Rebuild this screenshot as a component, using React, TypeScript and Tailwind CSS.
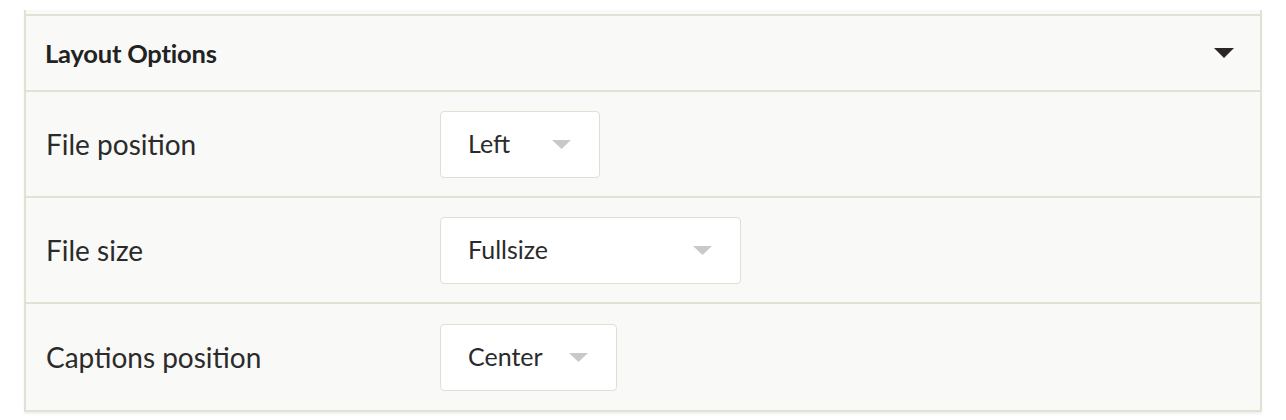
import React from 'react';

interface OptionRow {
  label: string;
  value: string;
  width: string;
}

const rows: OptionRow[] = [
  { label: 'File position', value: 'Left', width: 'w-[160px]' },
  { label: 'File size', value: 'Fullsize', width: 'w-[301px]' },
  { label: 'Captions position', value: 'Center', width: 'w-[177px]' },
];

function Caret({ className }: { className: string }) {
  return (
    <svg width="19" height="9" viewBox="0 0 19 9" className={className}>
      <path d="M0 0h19L9.5 9z" fill="currentColor" />
    </svg>
  );
}

function SelectBox({ value, width }: { value: string; width: string }) {
  return (
    <div className={`${width} h-[67px] bg-white border border-[#e0dfd2] rounded-[4px] flex items-center justify-between pl-[27px] pr-[28px]`}>
      <span className="text-[25px] text-[#2b2b2b]">{value}</span>
      <Caret className="text-[#c9c9c9]" />
    </div>
  );
}

export default function App() {
  return (
    <div className="w-[1286px] h-[420px] bg-white pt-[10px] pl-[24px]" style={{ fontFamily: 'Lato, "Open Sans", sans-serif' }}>
      <div className="w-[1238px] bg-[#f9f9f7] border-x-2 border-b-2 border-[#e3e1d4] pt-[4px] shadow-[0_2px_2px_rgba(0,0,0,0.06)]">
        <div className="h-[78px] border-y-2 border-[#e3e1d4] flex items-center justify-between pl-[19px] pr-[26px]">
          <span className="text-[25.5px] font-bold text-[#222] tracking-[-0.2px]">Layout Options</span>
          <svg width="20" height="10" viewBox="0 0 20 10" className="text-[#2b2523]">
            <path d="M0 0h20L10 10z" fill="currentColor" />
          </svg>
        </div>
        {rows.map((row, i) => (
          <div
            key={row.label}
            className={`h-[106px] flex items-center pl-[20px] ${i < rows.length - 1 ? 'border-b-2 border-[#e3e1d4]' : ''}`}
          >
            <div className="w-[394px] text-[28px] text-[#2b2b2b]">{row.label}</div>
            <SelectBox value={row.value} width={row.width} />
          </div>
        ))}
      </div>
    </div>
  );
}
